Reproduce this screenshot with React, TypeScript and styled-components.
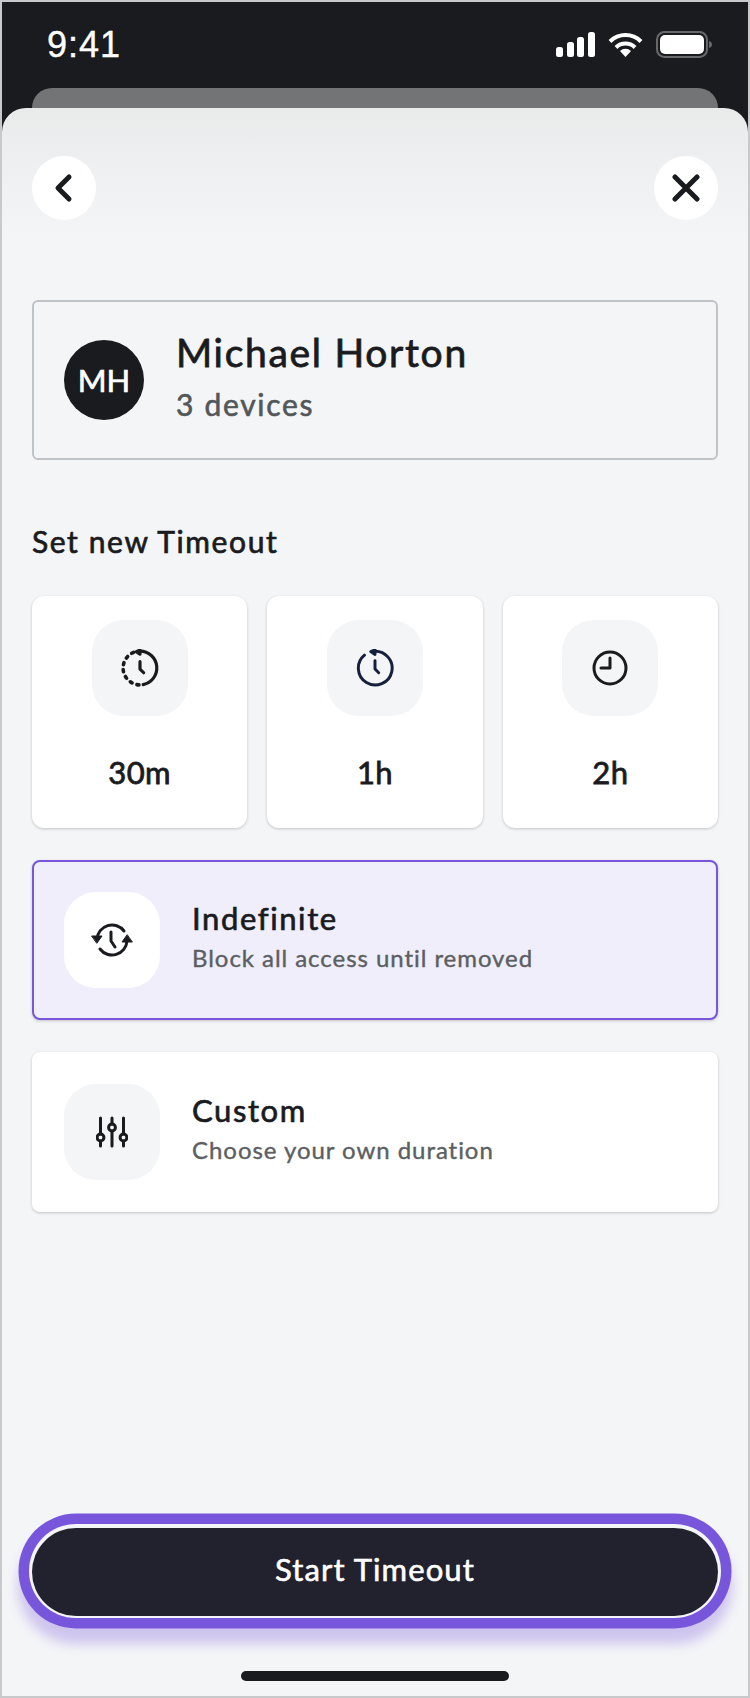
import React from "react";
import styled, { createGlobalStyle } from "styled-components";

const GlobalStyle = createGlobalStyle`
  html, body { margin: 0; padding: 0; background: #c8c9ca; }
  * { box-sizing: border-box; }
`;

const FONT = `Lato, "Noto Sans", sans-serif`;

function Clock30() {
  return (
    <svg width="38" height="38" viewBox="0 0 36 36" fill="none" stroke="#1a1b1e" strokeWidth="3" strokeLinecap="round" strokeLinejoin="round">
      <path d="M18 2a16 16 0 0 1 3 31.700" />
      <path d="M17 34a16 16 0 0 1-15-16 16 16 0 0 1 12-15.500" strokeWidth="3.400" strokeDasharray="2 4.800" />
      <path d="M14.500 2.500 18 1v4z" fill="#1a1b1e" />
      <path d="M18 12v7l3.500 3.500" />
    </svg>
  );
}

function Clock1h() {
  return (
    <svg width="38" height="38" viewBox="0 0 36 36" fill="none" stroke="#15203d" strokeWidth="2.800" strokeLinecap="round" strokeLinejoin="round">
      <path d="M16.500 2.200A16 16 0 1 1 8 5.800" />
      <path d="M14 2.500 18 .8v4.400z" fill="#15203d" />
      <path d="M18 11v8l3.500 3.500" />
    </svg>
  );
}

function Clock2h() {
  return (
    <svg width="36" height="36" viewBox="0 0 36 36" fill="none" stroke="#1a1b1e" strokeWidth="3" strokeLinecap="round" strokeLinejoin="round">
      <circle cx="18" cy="18" r="16" />
      <path d="M18 8v10H9" />
    </svg>
  );
}

function ClockLoop() {
  return (
    <svg width="42" height="36" viewBox="0 0 42 36" fill="none" stroke="#1a1b1e" strokeWidth="3" strokeLinecap="round" strokeLinejoin="round">
      <path d="M6 17A15 15 0 0 1 33 9" />
      <path d="M36 19A15 15 0 0 1 9 27" />
      <path d="M1 14h10l-5 7z" fill="#1a1b1e" strokeWidth="1" />
      <path d="M41 20H31l5-7z" fill="#1a1b1e" strokeWidth="1" />
      <path d="M20 10v9l4 6" />
    </svg>
  );
}

function Sliders() {
  return (
    <svg width="32" height="32" viewBox="0 0 32 32" fill="none" stroke="#1a1b1e" strokeWidth="3" strokeLinecap="round">
      <path d="M4.500 2v16M4.500 25v5M16 2v6M16 15v15M27.500 2v16M27.500 25v5" />
      <circle cx="4.500" cy="21.500" r="3.400" />
      <circle cx="16" cy="11.500" r="3.400" />
      <circle cx="27.500" cy="21.500" r="3.400" />
    </svg>
  );
}

function StatusIcons() {
  return (
    <StatusIconRow>
      <svg width="39" height="25" viewBox="0 0 39 25" fill="#fff">
        <rect x="0" y="15" width="7" height="10" rx="2.500" />
        <rect x="11" y="10" width="7" height="15" rx="2.500" />
        <rect x="21" y="5" width="7" height="20" rx="2.500" />
        <rect x="32" y="0" width="7" height="25" rx="2.500" />
      </svg>
      <svg width="35" height="25" viewBox="0 0 35 25" fill="none" stroke="#fff" strokeWidth="4">
        <path d="M2 9.500a22 22 0 0 1 31 0" />
        <path d="M8 15.500a13.500 13.500 0 0 1 19 0" />
        <path d="M17.500 25l-5.500-6a8 8 0 0 1 11 0z" fill="#fff" stroke="none" />
      </svg>
      <svg width="56" height="27" viewBox="0 0 56 27">
        <rect x="1" y="1" width="50" height="25" rx="7.500" fill="none" stroke="#68696b" strokeWidth="2" />
        <rect x="4" y="4" width="44" height="19" rx="5" fill="#fff" />
        <path d="M53 10c1.800.5 3 1.800 3 3.500s-1.200 3-3 3.500z" fill="#68696b" />
      </svg>
    </StatusIconRow>
  );
}

const tiles = [
  { label: "30m", icon: <Clock30 /> },
  { label: "1h", icon: <Clock1h /> },
  { label: "2h", icon: <Clock2h /> },
];

export default function App() {
  return (
    <>
      <GlobalStyle />
      <Frame>
        <StatusBar>
          <Time>9:41</Time>
          <StatusIcons />
        </StatusBar>
        <PeekCard />
        <Sheet>
          <Nav>
            <RoundButton aria-label="Back">
              <svg width="20" height="30" viewBox="0 0 20 30" fill="none" stroke="#1a1b1e" strokeWidth="5" strokeLinecap="round" strokeLinejoin="round">
                <path d="M15 4 4 15l11 11" />
              </svg>
            </RoundButton>
            <RoundButton aria-label="Close">
              <svg width="28" height="28" viewBox="0 0 28 28" fill="none" stroke="#1a1b1e" strokeWidth="5" strokeLinecap="round">
                <path d="M3 3l22 22M25 3 3 25" />
              </svg>
            </RoundButton>
          </Nav>

          <ProfileCard>
            <Avatar>MH</Avatar>
            <ProfileText>
              <ProfileName>Michael Horton</ProfileName>
              <ProfileMeta>3 devices</ProfileMeta>
            </ProfileText>
          </ProfileCard>

          <SectionTitle>Set new Timeout</SectionTitle>

          <TileGrid>
            {tiles.map((tile) => (
              <Tile key={tile.label}>
                <IconBox>{tile.icon}</IconBox>
                <TileLabel>{tile.label}</TileLabel>
              </Tile>
            ))}
          </TileGrid>

          <Option $selected>
            <IconBox $light>
              <ClockLoop />
            </IconBox>
            <OptionBody>
              <OptionTitle>Indefinite</OptionTitle>
              <OptionText>Block all access until removed</OptionText>
            </OptionBody>
          </Option>

          <Option>
            <IconBox>
              <Sliders />
            </IconBox>
            <OptionBody>
              <OptionTitle>Custom</OptionTitle>
              <OptionText>Choose your own duration</OptionText>
            </OptionBody>
          </Option>

          <StartButton>Start Timeout</StartButton>
          <HomeIndicator />
        </Sheet>
      </Frame>
    </>
  );
}

const Frame = styled.div`
  width: 750px;
  height: 1698px;
  border: 2px solid #c8c9ca;
  background: #1a1b1e;
  display: flex;
  flex-direction: column;
  overflow: hidden;
  font-family: ${FONT};
`;
const StatusBar = styled.div`
  height: 64px;
  padding: 20px 36px 0 45px;
  display: flex;
  justify-content: space-between;
  align-items: center;
`;
const Time = styled.span`
  padding-top: 2px;
  font-family: "Liberation Sans", Arial, sans-serif;
  font-size: 36px;
  letter-spacing: 1px;
  -webkit-text-stroke: 0.4px #fff;
  color: #fff;
`;
const StatusIconRow = styled.div`
  display: flex;
  align-items: center;
  gap: 13px;
`;
const PeekCard = styled.div`
  height: 20px;
  margin: 22px 30px 0;
  flex-shrink: 0;
  border-radius: 20px 20px 0 0;
  background: #737476;
`;
const Sheet = styled.div`
  flex: 1;
  display: flex;
  flex-direction: column;
  padding: 48px 30px 15px;
  border-radius: 24px 24px 0 0;
  background: linear-gradient(#e9ebeb 0, #f4f5f7 130px);
`;
const Nav = styled.div`
  display: flex;
  justify-content: space-between;
`;
const RoundButton = styled.button`
  width: 64px;
  height: 64px;
  padding: 0;
  border: 0;
  border-radius: 50%;
  background: #fff;
  display: flex;
  align-items: center;
  justify-content: center;
`;
const ProfileCard = styled.div`
  height: 160px;
  margin-top: 80px;
  padding: 0 30px;
  display: flex;
  align-items: center;
  gap: 32px;
  border: 2px solid #bdc3c7;
  border-radius: 6px;
`;
const Avatar = styled.div`
  width: 80px;
  height: 80px;
  flex-shrink: 0;
  border-radius: 50%;
  background: #1a1b1e;
  color: #fff;
  font-size: 31px;
  -webkit-text-stroke: 0.7px #fff;
  display: flex;
  align-items: center;
  justify-content: center;
`;
const ProfileText = styled.div`
  padding-bottom: 11px;
`;
const ProfileName = styled.div`
  font-size: 39px;
  line-height: 52px;
  letter-spacing: 1.7px;
  -webkit-text-stroke: 0.8px #1a1b1e;
  color: #1a1b1e;
`;
const ProfileMeta = styled.div`
  font-size: 30px;
  line-height: 40px;
  margin-top: 6px;
  letter-spacing: 1.7px;
  -webkit-text-stroke: 0.6px #525759;
  color: #525759;
`;
const SectionTitle = styled.h2`
  margin: 61px 0 0;
  font-size: 30px;
  font-weight: 400;
  line-height: 40px;
  letter-spacing: 1.6px;
  -webkit-text-stroke: 0.7px #1a1b1e;
  color: #1a1b1e;
`;
const TileGrid = styled.div`
  display: grid;
  grid-template-columns: repeat(3, 1fr);
  gap: 20px;
  margin-top: 35px;
`;
const Tile = styled.div`
  height: 232px;
  padding-top: 24px;
  display: flex;
  flex-direction: column;
  align-items: center;
  border-radius: 12px;
  background: #fff;
  box-shadow: 0 1px 3px rgba(20, 24, 30, 0.22);
`;
const IconBox = styled.div<{ $light?: boolean }>`
  width: 96px;
  height: 96px;
  flex-shrink: 0;
  border-radius: 32px;
  background: ${(p) => (p.$light ? "#fff" : "#f4f5f7")};
  display: flex;
  align-items: center;
  justify-content: center;
`;
const TileLabel = styled.div`
  margin-top: 36px;
  font-size: 31px;
  line-height: 40px;
  letter-spacing: 0.4px;
  -webkit-text-stroke: 0.8px #1a1b1e;
  color: #1a1b1e;
`;
const Option = styled.div<{ $selected?: boolean }>`
  height: 160px;
  margin-top: 32px;
  padding: 0 ${(p) => (p.$selected ? "30px" : "32px")};
  display: flex;
  align-items: center;
  gap: 32px;
  border-radius: 8px;
  background: ${(p) => (p.$selected ? "#f0eefb" : "#fff")};
  border: ${(p) => (p.$selected ? "2px solid #7856db" : "0")};
  box-shadow: 0 1px 3px rgba(20, 24, 30, 0.22);
`;
const OptionBody = styled.div`
  padding-bottom: 8px;
`;
const OptionTitle = styled.div`
  font-size: 31px;
  line-height: 40px;
  letter-spacing: 1.6px;
  -webkit-text-stroke: 0.7px #1a1b1e;
  color: #1a1b1e;
`;
const OptionText = styled.div`
  margin-top: 4px;
  font-size: 24px;
  line-height: 32px;
  letter-spacing: 0.95px;
  -webkit-text-stroke: 0.4px #5c5f62;
  color: #5c5f62;
`;
const StartButton = styled.button`
  height: 88px;
  margin-top: auto;
  padding: 0 0 7px;
  border: 0;
  border-radius: 44px;
  background: #22222e;
  color: #fff;
  font-family: ${FONT};
  font-size: 31px;
  letter-spacing: 1.1px;
  -webkit-text-stroke: 0.6px #fff;
  box-shadow:
    0 -1px 0 3px #f4f5f7,
    0 -1px 0 13.5px #7856db,
    0 14px 12px 14px rgba(120, 86, 219, 0.3);
`;
const HomeIndicator = styled.div`
  width: 268px;
  height: 10px;
  margin: 55px auto 0;
  border-radius: 5px;
  background: #1a1b1e;
`;
